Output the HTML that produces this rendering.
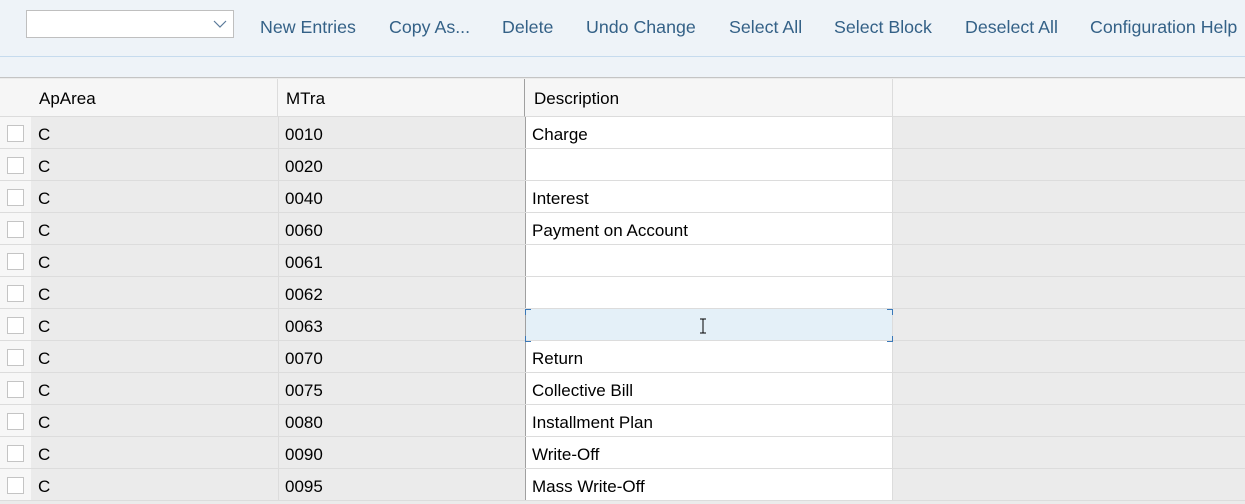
<!DOCTYPE html>
<html><head><style>
*{margin:0;padding:0;box-sizing:border-box}
body{width:1245px;height:502px;overflow:hidden;background:#ebebeb;font-family:"Liberation Sans",Arial,sans-serif;position:relative}
.tb{position:absolute;left:0;top:0;width:1245px;height:57px;background:#eef3f8;border-bottom:1px solid #c6dbee}
.band{position:absolute;left:0;top:57px;width:1245px;height:21px;background:#eef3f8;border-bottom:1px solid #c4c4c4}
.dd{position:absolute;left:26px;top:10px;width:208px;height:28px;background:#fff;border:1px solid #bfbfbf}
.btn{position:absolute;top:17px;font-size:17.8px;color:#346187;white-space:nowrap}
.hdr{position:absolute;top:79px;height:38px;background:#f6f6f6;font-size:17px;color:#000;line-height:40px;border-bottom:1px solid #dcdcdc}
.row{position:absolute;left:0;width:1245px;height:32px;border-bottom:1px solid #dcdcdc}
.c{position:absolute;top:0;height:31px;line-height:35px;font-size:17px;color:#000}
.cb{position:absolute;left:7px;top:8px;width:17px;height:17px;border:1px solid #c4c4c4;background:#fff}
</style></head><body>
<div class="tb">
<div class="dd"><svg style="position:absolute;left:186px;top:9px" width="14" height="9"><path d="M1 1 L7 7 L13 1" fill="none" stroke="#5a7a9a" stroke-width="1.2"/></svg></div>
<span class="btn" style="left:260px">New Entries</span>
<span class="btn" style="left:389px">Copy As...</span>
<span class="btn" style="left:502px">Delete</span>
<span class="btn" style="left:586px">Undo Change</span>
<span class="btn" style="left:729px">Select All</span>
<span class="btn" style="left:834px">Select Block</span>
<span class="btn" style="left:965px">Deselect All</span>
<span class="btn" style="left:1090px">Configuration Help</span>
</div>
<div class="band"></div>
<div class="hdr" style="left:0;width:31px"></div>
<div class="hdr" style="left:31px;width:247px;padding-left:8px;border-right:1px solid #dcdcdc">ApArea</div>
<div class="hdr" style="left:278px;width:247px;padding-left:8px;border-right:1px solid #a0a0a0">MTra</div>
<div class="hdr" style="left:525px;width:368px;padding-left:9px;border-right:1px solid #dcdcdc">Description</div>
<div class="hdr" style="left:893px;width:352px"></div>
<div id="rows"></div>
<script>
var d=[["0010","Charge"],["0020",""],["0040","Interest"],["0060","Payment on Account"],["0061",""],["0062",""],["0063",""],["0070","Return"],["0075","Collective Bill"],["0080","Installment Plan"],["0090","Write-Off"],["0095","Mass Write-Off"]];
var h="";
d.forEach(function(r,i){var t=117+i*32;var sel=i==6;
h+='<div class="row" style="top:'+t+'px"><div class="c" style="left:0;width:31px;background:#f7f7f7"><div class="cb"></div></div>'+
'<div class="c" style="left:38px">C</div><div class="c" style="left:278px;width:1px;background:#dcdcdc"></div><div class="c" style="left:285px">'+r[0]+'</div>'+
'<div class="c" style="left:525px;width:368px;padding-left:6px;background:'+(sel?'#e4f0f8':'#fff')+';border-left:1px solid #a0a0a0;border-right:1px solid #dcdcdc">'+r[1]+'</div></div>';});
document.getElementById('rows').innerHTML=h;
</script>
<div style="position:absolute;left:525px;top:309px;width:368px;height:33px">
<div style="position:absolute;left:0;top:0;width:6px;height:6px;border-left:1px solid #3a78b8;border-top:1px solid #3a78b8"></div>
<div style="position:absolute;right:0;top:0;width:6px;height:6px;border-right:1px solid #3a78b8;border-top:1px solid #3a78b8"></div>
<div style="position:absolute;left:0;bottom:0;width:6px;height:6px;border-left:1px solid #3a78b8;border-bottom:1px solid #3a78b8"></div>
<div style="position:absolute;right:0;bottom:0;width:6px;height:6px;border-right:1px solid #3a78b8;border-bottom:1px solid #3a78b8"></div>
<svg style="position:absolute;left:174px;top:9px" width="8" height="16"><path d="M1 1H7M4 1V15M1 15H7" stroke="#000" stroke-width="1" fill="none"/></svg>
</div>
</body></html>
